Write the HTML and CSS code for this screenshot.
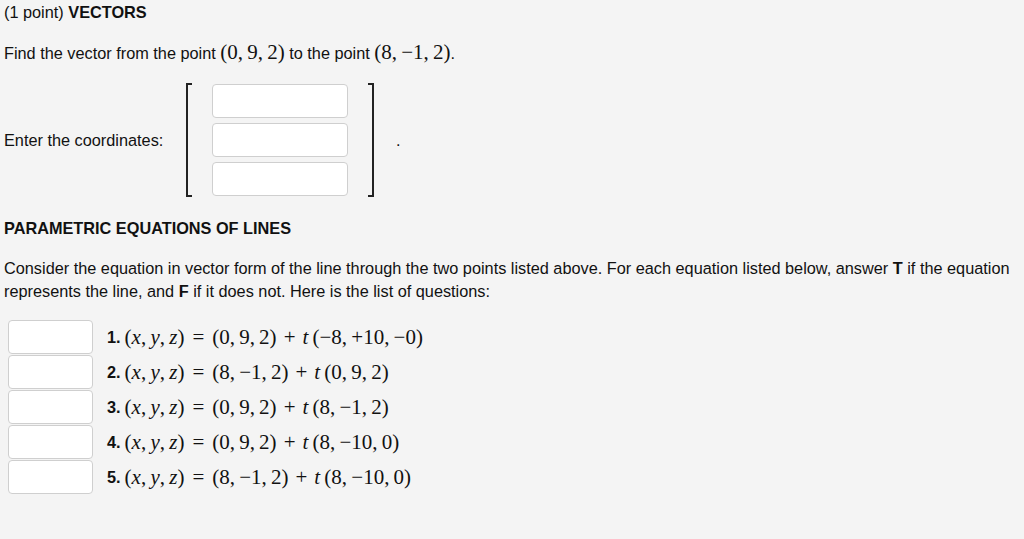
FILE: index.html
```html
<!DOCTYPE html>
<html>
<head>
<meta charset="utf-8">
<link rel="stylesheet" href="styles.css">
</head>
<body>
<div class="page">
  <div class="title">(1 point) <b>VECTORS</b></div>
  <p class="intro">Find the vector from the point <span class="m">(0,&#8201;9,&#8201;2)</span> to the point <span class="m">(8,&#8201;−1,&#8201;2)</span>.</p>

  <div class="coords">
    <span class="label">Enter the coordinates:</span>
    <div class="matrix">
      <span class="br left"></span>
      <div class="cells">
        <input class="cell" type="text">
        <input class="cell" type="text">
        <input class="cell" type="text">
      </div>
      <span class="br right"></span>
    </div>
    <span class="dot">.</span>
  </div>

  <div class="heading">PARAMETRIC EQUATIONS OF LINES</div>
  <p class="desc">Consider the equation in vector form of the line through the two points listed above. For each equation listed below, answer <b>T</b> if the equation represents the line, and <b>F</b> if it does not. Here is the list of questions:</p>

  <div class="questions">
    <div class="q"><input class="ans" type="text"><span class="num">1.</span><span class="m">(<i>x</i>,&#8201;<i>y</i>,&#8201;<i>z</i>)<span class="rel">=</span>(0,&#8201;9,&#8201;2)<span class="bin">+</span><i>t</i>&#8201;(−8,&#8201;+10,&#8201;−0)</span></div>
    <div class="q"><input class="ans" type="text"><span class="num">2.</span><span class="m">(<i>x</i>,&#8201;<i>y</i>,&#8201;<i>z</i>)<span class="rel">=</span>(8,&#8201;−1,&#8201;2)<span class="bin">+</span><i>t</i>&#8201;(0,&#8201;9,&#8201;2)</span></div>
    <div class="q"><input class="ans" type="text"><span class="num">3.</span><span class="m">(<i>x</i>,&#8201;<i>y</i>,&#8201;<i>z</i>)<span class="rel">=</span>(0,&#8201;9,&#8201;2)<span class="bin">+</span><i>t</i>&#8201;(8,&#8201;−1,&#8201;2)</span></div>
    <div class="q"><input class="ans" type="text"><span class="num">4.</span><span class="m">(<i>x</i>,&#8201;<i>y</i>,&#8201;<i>z</i>)<span class="rel">=</span>(0,&#8201;9,&#8201;2)<span class="bin">+</span><i>t</i>&#8201;(8,&#8201;−10,&#8201;0)</span></div>
    <div class="q"><input class="ans" type="text"><span class="num">5.</span><span class="m">(<i>x</i>,&#8201;<i>y</i>,&#8201;<i>z</i>)<span class="rel">=</span>(8,&#8201;−1,&#8201;2)<span class="bin">+</span><i>t</i>&#8201;(8,&#8201;−10,&#8201;0)</span></div>
  </div>
</div>
</body>
</html>
```
FILE: styles.css
```css
html, body {
  margin: 0;
  padding: 0;
  background: #f4f4f4;
}
body {
  font-family: "Liberation Sans", Arial, sans-serif;
  font-size: 16.3px;
  color: #111;
}
.page {
  padding: 3px 4px 0 4px;
}
.title {
  line-height: 18px;
}
.intro {
  margin: 21px 0 0 0;
  line-height: 22px;
}
.m {
  font-family: "Liberation Serif", "Times New Roman", serif;
  font-size: 21px;
  line-height: 1;
}
.m i {
  font-style: italic;
}
.rel {
  margin: 0 8px;
}
.bin {
  margin: 0 7px;
}
.coords {
  display: flex;
  align-items: center;
  margin-top: 20px;
}
.label {
  width: 181px;
  line-height: 18px;
}
.matrix {
  display: flex;
  align-items: stretch;
}
.br {
  width: 4px;
  margin: -1px 0;
  border-top: 2px solid #222;
  border-bottom: 2px solid #222;
}
.br.left {
  border-left: 2px solid #222;
  margin-left: 1px;
}
.br.right {
  border-right: 2px solid #222;
}
.cells {
  display: flex;
  flex-direction: column;
  gap: 5px;
  padding: 0 20px 0 20px;
}
.cell {
  box-sizing: border-box;
  width: 136px;
  height: 34px;
  margin: 0;
  border: 1px solid #cfcfcf;
  border-radius: 4px;
  background: #fff;
}
.dot {
  margin-left: 22px;
}
.heading {
  font-weight: bold;
  margin-top: 23px;
  line-height: 18px;
}
.desc {
  margin: 20px 0 0 0;
  line-height: 23px;
}
.questions {
  margin-top: 17px;
  display: flex;
  flex-direction: column;
  gap: 1px;
  padding-left: 4px;
}
.q {
  display: flex;
  align-items: center;
  height: 34px;
}
.ans {
  box-sizing: border-box;
  width: 85px;
  height: 34px;
  margin: 0 14px 0 0;
  border: 1px solid #cfcfcf;
  border-radius: 4px;
  background: #fff;
}
.num {
  font-weight: bold;
  margin-right: 4px;
}
```
